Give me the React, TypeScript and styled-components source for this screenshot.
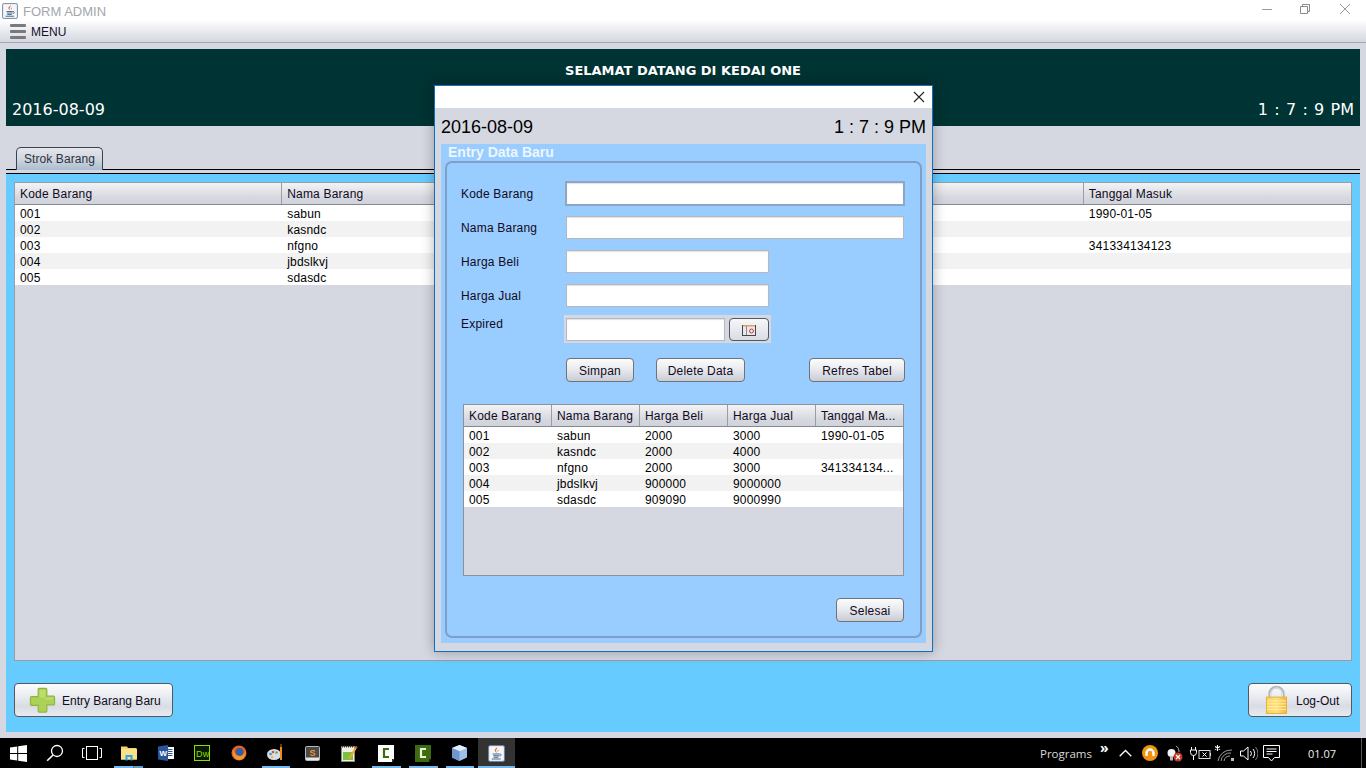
import styled, { createGlobalStyle } from 'styled-components';

const GlobalStyle = createGlobalStyle`
  html, body {
    margin: 0;
    padding: 0;
    width: 1366px;
    height: 768px;
    overflow: hidden;
    background: #d5d8e1;
  }
  * {
    box-sizing: border-box;
  }
`;

const stock = [
  ['001', 'sabun', '2000', '3000', '1990-01-05'],
  ['002', 'kasndc', '2000', '4000', ''],
  ['003', 'nfgno', '2000', '3000', '341334134123'],
  ['004', 'jbdslkvj', '900000', '9000000', ''],
  ['005', 'sdasdc', '909090', '9000990', ''],
];

const JavaIcon = ({ size = 16 }: { size?: number }) => (
  <svg width={size} height={size} viewBox="0 0 18 18">
    <rect x="0.5" y="0.5" width="17" height="17" rx="2" fill="#dfe9f5" stroke="#6d8197" />
    <rect x="2" y="2" width="14" height="14" fill="#f3f6fb" />
    <path d="M9.5 2.5c1.2 1.6-1.8 2.6-.8 4.4.3.6.7 1 .9 1.4-1.8-1-3-2.2-2.2-3.6.5-.9 2-1.2 2.1-2.2z" fill="#e2711d" />
    <path d="M11.2 5c.3 1-1 1.5-.6 2.6-.8-.8-.9-1.8.6-2.6z" fill="#e2711d" />
    <path d="M5 9.6h7.2M5.5 11.3h6.4M6 13h5M4 14.9h9.5" stroke="#49698a" strokeWidth="1.1" fill="none" />
    <path d="M12.2 9.6c2.2-.4 2.4 1.9 0 2.2" stroke="#49698a" fill="none" />
  </svg>
);

const PlusIcon = () => (
  <svg width="27" height="27" viewBox="0 0 28 28">
    <path
      d="M10.5 1.5h7a1 1 0 0 1 1 1v7h7a1 1 0 0 1 1 1v7a1 1 0 0 1-1 1h-7v6.500a1 1 0 0 1-1 1h-7a1 1 0 0 1-1-1V19h-7a1 1 0 0 1-1-1v-7a1 1 0 0 1 1-1h7V2.500a1 1 0 0 1 1-1z"
      fill="#abd155"
      stroke="#8fb540"
      strokeWidth="1.2"
    />
    <path d="M11 3h6v8h8v2h-8v-2h-6z" fill="#c4e27a" opacity="0.7" />
  </svg>
);

const LockIcon = () => (
  <svg width="23" height="30" viewBox="0 0 24 31">
    <defs>
      <linearGradient id="lockBody" x1="0" y1="0" x2="1" y2="0">
        <stop offset="0" stopColor="#fbd25c" />
        <stop offset="0.5" stopColor="#ffe07a" />
        <stop offset="1" stopColor="#f3b93a" />
      </linearGradient>
    </defs>
    <path d="M5 13V9a7 7 0 0 1 14 0v4" fill="none" stroke="#b4b6ba" strokeWidth="3" />
    <path d="M5.800 13V9a6.200 6.200 0 0 1 12.400 0v4" fill="none" stroke="#e6e7ea" strokeWidth="1" />
    <rect x="1.500" y="12.500" width="21" height="17" fill="url(#lockBody)" stroke="#e9ae35" />
    <path d="M2 16.500h20M2 19.500h20M2 22.500h20M2 25.500h20" stroke="#fff0b0" strokeWidth="1" />
  </svg>
);

const CalendarIcon = () => (
  <svg width="14" height="12" viewBox="0 0 14 12">
    <rect x="0.5" y="1.500" width="13" height="10" fill="#e8e8ee" stroke="#44464c" />
    <rect x="1" y="1" width="12" height="1.500" fill="#e0a060" />
    <path d="M4.500 2v9" stroke="#8a8c94" />
    <circle cx="9.500" cy="7" r="2" fill="none" stroke="#d8382e" />
  </svg>
);

const WindowsLogo = () => (
  <svg width="17" height="17" viewBox="0 0 17 17">
    <path d="M0 2.600 7.200 1.500v6.500H0zM8.200 1.300 17 0v8H8.200zM0 9h7.200v6.500L0 14.400zM8.200 9H17v8l-8.800-1.300z" fill="#fff" />
  </svg>
);

const SearchGlyph = () => (
  <svg width="18" height="18" viewBox="0 0 18 18">
    <circle cx="11" cy="7" r="5.500" fill="none" stroke="#fff" strokeWidth="1.300" />
    <path d="M7 11 1.200 16.800" stroke="#fff" strokeWidth="1.600" />
  </svg>
);

const TaskViewGlyph = () => (
  <svg width="20" height="14" viewBox="0 0 20 14">
    <rect x="4.500" y="0.500" width="11" height="13" fill="none" stroke="#fff" />
    <path d="M2.500 2.500H.5v9h2M17.500 2.500h2v9h-2" fill="none" stroke="#fff" />
  </svg>
);

const FolderGlyph = () => (
  <svg width="16" height="16" viewBox="0 0 16 16">
    <path d="M0 1.500h6l1 1.500h8.500v11.500H0z" fill="#f4d36b" />
    <rect x="0" y="4" width="16" height="10.500" fill="#fbe08a" />
    <path d="M4.500 15.500V10h7v5.500H9.500V12h-3v3.500z" fill="#2ea7e6" />
  </svg>
);

const WordGlyph = () => (
  <svg width="16" height="16" viewBox="0 0 16 16">
    <rect x="6" y="2" width="10" height="12" fill="#fff" />
    <path d="M10 4.500h4.500M10 6.500h4.500M10 8.500h4.500M10 10.500h4.500" stroke="#2a5699" />
    <path d="M0 1.500 10 0v16L0 14.500z" fill="#2a5699" />
    <text x="1.500" y="11" fontSize="8" fontWeight="700" fill="#fff" fontFamily="Liberation Sans, sans-serif">W</text>
  </svg>
);

const DwGlyph = () => (
  <svg width="16" height="16" viewBox="0 0 16 16">
    <rect x="0.500" y="0.500" width="15" height="15" fill="#0a1a00" stroke="#8fdc00" />
    <text x="2" y="11.500" fontSize="9" fill="#8fdc00" fontFamily="Liberation Sans, sans-serif">Dw</text>
  </svg>
);

const FirefoxGlyph = () => (
  <svg width="16" height="16" viewBox="0 0 16 16">
    <circle cx="8" cy="8" r="7.500" fill="#e8651f" />
    <circle cx="8.500" cy="7" r="4" fill="#2e5fa8" />
    <path d="M2 4c1 4 3 7 7 7 2 0 4-1.500 5.500-5 .5 4-2 9-6.500 9C4 15 .5 9 2 4z" fill="#f39a26" />
  </svg>
);

const PaletteGlyph = () => (
  <svg width="18" height="18" viewBox="0 0 18 18">
    <ellipse cx="7" cy="10.500" rx="7" ry="5.500" fill="#d5dde8" />
    <circle cx="3.500" cy="10" r="1.300" fill="#3f8fd8" />
    <circle cx="6" cy="8" r="1.300" fill="#e24b3b" />
    <circle cx="9.500" cy="8.500" r="1.300" fill="#5cb848" />
    <circle cx="5" cy="13" r="1.300" fill="#f0c030" />
    <path d="M14 1v15" stroke="#ef8a1d" strokeWidth="2" />
    <path d="M13 0h2v3h-2z" fill="#5a3a20" />
  </svg>
);

const SublimeGlyph = () => (
  <svg width="15" height="15" viewBox="0 0 15 15">
    <rect x="0.500" y="0.500" width="14" height="14" rx="1" fill="#4a4a4a" stroke="#b8b8b8" />
    <rect x="1" y="11.500" width="13" height="2.500" fill="#e6e6e6" />
    <text x="4.500" y="9.500" fontSize="9" fontWeight="700" fill="#f0952c" fontFamily="Liberation Sans, sans-serif">S</text>
  </svg>
);

const NotepadGlyph = () => (
  <svg width="17" height="17" viewBox="0 0 17 17">
    <rect x="0.500" y="1.500" width="13" height="15" fill="#f0f0e6" stroke="#8a8a80" />
    <path d="M1 1.500h12" stroke="#333" strokeWidth="2" strokeDasharray="1 1" />
    <rect x="2" y="7" width="10" height="8" fill="#7cc043" />
    <path d="M8 12 15 1l1.500 1L9.500 13.500 7.500 14z" fill="#f0a828" />
    <path d="M15 1l1.500 1-.8 1.200-1.500-1z" fill="#d8342c" />
  </svg>
);

const CamtasiaGlyph = ({ $green }: { $green?: boolean }) => (
  <svg width="16" height="17" viewBox="0 0 16 17">
    <path d="M0 0h16v14l-2 3H0z" fill={$green ? '#3e6b10' : '#fff'} />
    <path d="M16 14l-2 3v-3z" fill="#222" />
    <path d="M11 4H6v8h5" fill="none" stroke={$green ? '#e6f2d2' : '#3e6b10'} strokeWidth="2.200" />
  </svg>
);

const CubeGlyph = () => (
  <svg width="15" height="16" viewBox="0 0 15 16">
    <path d="M7.500 0 15 3v9.500L7.500 16 0 12.500V3z" fill="#9cc0e8" />
    <path d="M0 3l7.500 3.200L15 3 7.500 0z" fill="#e2eefb" />
    <path d="M7.500 6.200V16L0 12.500V3z" fill="#6f97cf" />
  </svg>
);

const RingGlyph = () => (
  <svg width="16" height="16" viewBox="0 0 16 16">
    <circle cx="8" cy="8" r="8" fill="#f0940f" />
    <path d="M4.500 11V8a3.500 3.500 0 0 1 7 0v3" fill="none" stroke="#fff" strokeWidth="2.400" />
  </svg>
);

const BulbGlyph = () => (
  <svg width="16" height="17" viewBox="0 0 16 17">
    <circle cx="4.500" cy="8" r="4" fill="#f2f2f2" />
    <rect x="3" y="11.500" width="3" height="4" fill="#b8b8b8" />
    <path d="M9 1c2 1 3 3 3 6" fill="none" stroke="#aaa" />
    <circle cx="11" cy="12" r="4.500" fill="#c0392b" />
    <path d="M9 10l4 4M13 10l-4 4" stroke="#fff" strokeWidth="1.200" />
  </svg>
);

const BatteryGlyph = () => (
  <svg width="22" height="15" viewBox="0 0 22 15">
    <path d="M1.500 1v3M5.500 1v3M0.500 4h6v2.500a3 3 0 0 1-6 0zM3.500 9.500V14" fill="none" stroke="#fff" />
    <rect x="9" y="4.500" width="11" height="8" fill="none" stroke="#ddd" />
    <path d="M20.500 7v3" stroke="#ddd" />
    <path d="M12.500 6.500l4 4M16.500 6.500l-4 4" stroke="#fff" />
  </svg>
);

const WifiGlyph = () => (
  <svg width="22" height="18" viewBox="0 0 22 18">
    <path d="M3.500 1v6M1 2.500l5 3M6 2.500l-5 3" stroke="#fff" strokeWidth="1.100" />
    <path d="M4 17a13 13 0 0 1 14-11M7 17a9 9 0 0 1 10-8M10 17a5.500 5.500 0 0 1 6-5" fill="none" stroke="#9a9a9a" />
    <rect x="17" y="14" width="3" height="3" fill="#bdbdbd" />
  </svg>
);

const VolumeGlyph = () => (
  <svg width="18" height="15" viewBox="0 0 18 15">
    <path d="M.5 5h3L8 1v13l-4.500-4h-3z" fill="none" stroke="#fff" />
    <path d="M10.500 5a4 4 0 0 1 0 5M13 3a7 7 0 0 1 0 9" fill="none" stroke="#fff" />
    <path d="M15.500 1a10 10 0 0 1 0 13" fill="none" stroke="#777" />
  </svg>
);

const NoticeGlyph = () => (
  <svg width="17" height="17" viewBox="0 0 17 17">
    <path d="M.5 .5h16v12h-5l-3 3.500-3-3.500h-5z" fill="none" stroke="#fff" />
    <path d="M3.500 4h10M3.500 6.500h10M3.500 9h6" stroke="#fff" />
  </svg>
);

const ChevronGlyph = () => (
  <svg width="13" height="8" viewBox="0 0 13 8">
    <path d="M.7 7.300 6.500 1.500l5.800 5.800" fill="none" stroke="#fff" strokeWidth="1.300" />
  </svg>
);

const taskbarApps = [
  { key: 'search', icon: <SearchGlyph /> },
  { key: 'tasks', icon: <TaskViewGlyph /> },
  { key: 'folder', icon: <FolderGlyph />, running: true, stacked: true },
  { key: 'word', icon: <WordGlyph /> },
  { key: 'dw', icon: <DwGlyph /> },
  { key: 'firefox', icon: <FirefoxGlyph /> },
  { key: 'palette', icon: <PaletteGlyph />, running: true },
  { key: 'sublime', icon: <SublimeGlyph /> },
  { key: 'notepad', icon: <NotepadGlyph /> },
  { key: 'camtasia', icon: <CamtasiaGlyph />, running: true },
  { key: 'camtasia2', icon: <CamtasiaGlyph $green />, running: true },
  { key: 'cube', icon: <CubeGlyph />, running: true },
];

const App = () => {
  return (
    <Page>
      <GlobalStyle />
      <TitleBar>
        <JavaIcon />
        <TitleText>FORM ADMIN</TitleText>
        <WindowButtons>
          <svg width="88" height="12" viewBox="0 0 88 12">
            <path d="M0 6.500h10" stroke="#9a9a9a" />
            <path d="M38.500 3.500h7v7h-7zM40.500 3.500v-2h7v7h-2" fill="none" stroke="#8a8a8a" />
            <path d="M78 1l10 10M88 1 78 11" stroke="#9a9a9a" />
          </svg>
        </WindowButtons>
      </TitleBar>

      <MenuBar>
        <MenuIcon>
          <span />
          <span />
          <span />
        </MenuIcon>
        MENU
      </MenuBar>

      <Content>
        <Banner>
          <BannerTitle>SELAMAT DATANG DI KEDAI ONE</BannerTitle>
          <BannerRow>
            <span>2016-08-09</span>
            <BannerTime>1 : 7 : 9 PM</BannerTime>
          </BannerRow>
        </Banner>

        <TabStrip>
          <Tab>Strok Barang</Tab>
        </TabStrip>

        <StockPanel>
          <TablePane>
            <HeaderRow>
              <HeaderCell>Kode Barang</HeaderCell>
              <HeaderCell>Nama Barang</HeaderCell>
              <HeaderCell>Harga Beli</HeaderCell>
              <HeaderCell>Harga Jual</HeaderCell>
              <HeaderCell>Tanggal Masuk</HeaderCell>
            </HeaderRow>
            {stock.map((row) => (
              <BodyRow key={row[0]}>
                {row.map((value, i) => (
                  <BodyCell key={i}>{value}</BodyCell>
                ))}
              </BodyRow>
            ))}
          </TablePane>
          <ActionRow>
            <BigButton $width={159} $pad={14} $gap={6}>
              <PlusIcon />
              <BigLabel>Entry Barang Baru</BigLabel>
            </BigButton>
            <BigButton $width={104} $pad={16} $gap={8}>
              <LockIcon />
              <BigLabel>Log-Out</BigLabel>
            </BigButton>
          </ActionRow>
        </StockPanel>
      </Content>

      <Taskbar>
        <AppSlot>
          <WindowsLogo />
        </AppSlot>
        {taskbarApps.map((app) => (
          <AppSlot key={app.key} $running={app.running} $stacked={app.stacked}>
            {app.icon}
          </AppSlot>
        ))}
        <AppSlot $running $active>
          <JavaIcon size={17} />
        </AppSlot>
        <Tray>
          <ProgramsLabel>Programs</ProgramsLabel>
          <MoreMark>»</MoreMark>
          <TrayIcon $width={26}>
            <ChevronGlyph />
          </TrayIcon>
          <TrayIcon $width={24}>
            <RingGlyph />
          </TrayIcon>
          <TrayIcon $width={26}>
            <BulbGlyph />
          </TrayIcon>
          <TrayIcon $width={25}>
            <BatteryGlyph />
          </TrayIcon>
          <TrayIcon $width={24}>
            <WifiGlyph />
          </TrayIcon>
          <TrayIcon $width={23}>
            <VolumeGlyph />
          </TrayIcon>
          <TrayIcon $width={23}>
            <NoticeGlyph />
          </TrayIcon>
          <Clock>01.07</Clock>
          <ShowDesktop />
        </Tray>
      </Taskbar>

      <Dialog>
        <DialogTitleBar>
          <svg width="12" height="12" viewBox="0 0 12 12">
            <path d="M1 1l10 10M11 1 1 11" stroke="#222" strokeWidth="1.100" />
          </svg>
        </DialogTitleBar>
        <DialogClock>
          <span>2016-08-09</span>
          <span>1 : 7 : 9 PM</span>
        </DialogClock>
        <EntryPanel>
          <EntryTitle>Entry Data Baru</EntryTitle>
          <EntryFrame>
            <FormGrid>
              <FieldLabel>Kode Barang</FieldLabel>
              <TextField $focused />
              <FieldLabel>Nama Barang</FieldLabel>
              <TextField />
              <FieldLabel>Harga Beli</FieldLabel>
              <TextField $short />
              <FieldLabel>Harga Jual</FieldLabel>
              <TextField $short />
              <ExpiredLabel>Expired</ExpiredLabel>
              <DatePicker>
                <DateInput />
                <DateButton>
                  <CalendarIcon />
                </DateButton>
              </DatePicker>
            </FormGrid>

            <ButtonRow>
              <SmallButton $width={68}>Simpan</SmallButton>
              <SmallButton $width={89}>Delete Data</SmallButton>
              <SmallButton $width={96} $pushRight>
                Refres Tabel
              </SmallButton>
            </ButtonRow>

            <MiniPane>
              <MiniHeaderRow>
                <HeaderCell>Kode Barang</HeaderCell>
                <HeaderCell>Nama Barang</HeaderCell>
                <HeaderCell>Harga Beli</HeaderCell>
                <HeaderCell>Harga Jual</HeaderCell>
                <HeaderCell>Tanggal Ma...</HeaderCell>
              </MiniHeaderRow>
              {stock.map((row) => (
                <MiniBodyRow key={row[0]}>
                  {row.map((value, i) => (
                    <BodyCell key={i}>{value.length > 10 ? '341334134...' : value}</BodyCell>
                  ))}
                </MiniBodyRow>
              ))}
            </MiniPane>

            <FinishRow>
              <SmallButton $width={68}>Selesai</SmallButton>
            </FinishRow>
          </EntryFrame>
        </EntryPanel>
      </Dialog>
    </Page>
  );
};

export default App;

const Page = styled.div`
  position: relative;
  width: 1366px;
  height: 768px;
  display: flex;
  flex-direction: column;
  background-color: #d5d8e1;
  font-family: 'Liberation Sans', Arial, sans-serif;
  font-size: 12px;
  letter-spacing: 0.2px;
  color: #110a22;
  overflow: hidden;
`;

const TitleBar = styled.div`
  height: 21px;
  padding: 1px 0 0 2px;
  display: flex;
  align-items: center;
  gap: 5px;
  background-color: #fff;
`;

const TitleText = styled.span`
  font-size: 13px;
  letter-spacing: 0;
  color: #a4a6ad;
`;

const WindowButtons = styled.div`
  margin-left: auto;
  margin-right: 16px;
  margin-top: -5px;
  display: flex;
`;

const MenuBar = styled.div`
  height: 22px;
  padding-left: 10px;
  display: flex;
  align-items: center;
  gap: 5px;
  font-size: 12px;
  letter-spacing: 0;
  color: #15102a;
  background: linear-gradient(#fdfdfe, #f0f1f4 30%, #d5d8e1);
  border-bottom: 1px solid #a3a6b0;
`;

const MenuIcon = styled.div`
  width: 16px;
  display: flex;
  flex-direction: column;
  gap: 3px;

  span {
    height: 3px;
    border-radius: 1px;
    background-color: #77797d;
  }
`;

const Content = styled.div`
  flex: 1;
  padding: 6px 6px 6px;
  display: flex;
  flex-direction: column;
`;

const Banner = styled.div`
  height: 77px;
  padding: 14px 6px 6px;
  display: flex;
  flex-direction: column;
  justify-content: space-between;
  background-color: #003333;
  color: #fff;
  letter-spacing: 0;
`;

const BannerTitle = styled.div`
  text-align: center;
  font-family: 'DejaVu Sans', Tahoma, sans-serif;
  font-size: 13px;
  font-weight: 700;
  line-height: 16px;
`;

const BannerRow = styled.div`
  display: flex;
  justify-content: space-between;
  font-family: 'DejaVu Sans', Tahoma, sans-serif;
  font-size: 16px;
  line-height: 21px;
`;

const BannerTime = styled.span`
  word-spacing: 1.2px;
`;

const TabStrip = styled.div`
  margin-top: 21px;
  height: 23px;
  padding-left: 10px;
  border-bottom: 1px solid #000;
  display: flex;
`;

const Tab = styled.div`
  width: 87px;
  height: 23px;
  display: flex;
  align-items: center;
  justify-content: center;
  border: 1px solid #3c4250;
  border-bottom: none;
  border-radius: 5px 5px 0 0;
  background: linear-gradient(#e4e7ec, #d0d6df 50%, #a9bdd0);
  font-size: 12px;
  letter-spacing: 0.1px;
  color: #2c3340;
`;

const StockPanel = styled.div`
  margin-top: 3px;
  flex: 1;
  padding: 8px 8px 15px;
  display: flex;
  flex-direction: column;
  gap: 22px;
  border-top: 1px solid #000;
  background-color: #66ccff;
`;

const TablePane = styled.div`
  flex: 1;
  border: 1px solid #9a9da6;
  background-color: #d5d8e1;
`;

const HeaderRow = styled.div`
  height: 22px;
  display: grid;
  grid-template-columns: repeat(5, 1fr);
  background: linear-gradient(#f2f3f5, #d6d8df 70%, #d0d3db);
  border-bottom: 1px solid #85888f;
`;

const HeaderCell = styled.div`
  padding: 1px 0 0 5px;
  line-height: 20px;
  white-space: nowrap;
  overflow: hidden;
  border-right: 1px solid #9a9da6;

  &:last-child {
    border-right: none;
  }
`;

const BodyRow = styled.div`
  height: 16px;
  display: grid;
  grid-template-columns: repeat(5, 1fr);
  background-color: #fff;

  &:nth-child(odd) {
    background-color: #f2f2f2;
  }
`;

const BodyCell = styled.div`
  padding-left: 5px;
  line-height: 18px;
  color: #000;
  white-space: nowrap;
  overflow: hidden;
`;

const ActionRow = styled.div`
  display: flex;
  justify-content: space-between;
`;

const BigButton = styled.button<{ $width: number; $pad: number; $gap: number }>`
  width: ${(p) => p.$width}px;
  height: 34px;
  padding: 0 0 0 ${(p) => p.$pad}px;
  display: flex;
  align-items: center;
  gap: ${(p) => p.$gap}px;
  border: 1px solid #55585f;
  border-radius: 4px;
  background: linear-gradient(#fbfcfd, #eef0f4 30%, #d9dce4 70%, #e9ebf0);
  font-family: inherit;
  font-size: 12px;
  letter-spacing: 0;
  color: #110a22;
  overflow: visible;
`;

const BigLabel = styled.span`
  margin-top: 2px;
`;

const Taskbar = styled.div`
  height: 30px;
  display: flex;
  background-color: #000;
`;

const AppSlot = styled.div<{ $running?: boolean; $active?: boolean; $stacked?: boolean }>`
  position: relative;
  width: 36.8px;
  height: 30px;
  display: flex;
  align-items: center;
  justify-content: center;
  background-color: ${(p) => (p.$active ? '#333' : 'transparent')};

  &::after {
    content: '';
    display: ${(p) => (p.$running ? 'block' : 'none')};
    position: absolute;
    bottom: 0;
    left: ${(p) => (p.$active ? '0' : '4px')};
    right: ${(p) => (p.$active ? '0' : '4px')};
    height: 2px;
    background: ${(p) =>
      p.$stacked ? 'linear-gradient(90deg, #76b9ed 66%, #3f6f96 66%, #5f9bc8 70%)' : '#76b9ed'};
  }
`;

const Tray = styled.div`
  margin-left: auto;
  display: flex;
  align-items: center;
  color: #e6e6e6;
  letter-spacing: 0;
`;

const ProgramsLabel = styled.span`
  font-family: 'Open Sans', sans-serif;
  font-size: 11.5px;
  color: #d8d8d8;
`;

const MoreMark = styled.span`
  width: 20px;
  margin-top: -12px;
  padding-left: 8px;
  font-family: 'Open Sans', sans-serif;
  font-size: 14px;
  font-weight: 700;
  color: #fff;
`;

const TrayIcon = styled.div<{ $width: number }>`
  width: ${(p) => p.$width}px;
  display: flex;
  justify-content: center;
`;

const Clock = styled.span`
  width: 78px;
  text-align: center;
  font-family: 'Open Sans', sans-serif;
  font-size: 11px;
  color: #eee;
`;

const ShowDesktop = styled.div`
  width: 5px;
  height: 30px;
  border-left: 1px solid #555;
`;

const Dialog = styled.div`
  position: absolute;
  left: 434px;
  top: 85px;
  width: 499px;
  height: 567px;
  display: flex;
  flex-direction: column;
  border: 1px solid #0f6fc0;
  background-color: #d5d8e1;
  box-shadow: 0 0 12px rgba(0, 0, 0, 0.3);
`;

const DialogTitleBar = styled.div`
  height: 22px;
  padding-right: 7px;
  display: flex;
  align-items: center;
  justify-content: flex-end;
  background-color: #fff;
`;

const DialogClock = styled.div`
  height: 36px;
  padding: 2px 6px 0;
  display: flex;
  align-items: center;
  justify-content: space-between;
  font-size: 18px;
  letter-spacing: 0;
  color: #000;
`;

const EntryPanel = styled.div`
  margin: 0 6px;
  height: 499px;
  padding: 0 4px 5px;
  display: flex;
  flex-direction: column;
  background-color: #99ccff;
`;

const EntryTitle = styled.div`
  height: 17px;
  padding-left: 3px;
  font-size: 14px;
  font-weight: 700;
  line-height: 17px;
  letter-spacing: 0;
  color: #eef6ff;
`;

const EntryFrame = styled.div`
  flex: 1;
  padding: 18px 17px 14px 14px;
  display: flex;
  flex-direction: column;
  border: 2px solid #7f9fc8;
  border-radius: 7px;
`;

const FormGrid = styled.div`
  display: grid;
  grid-template-columns: 105px 1fr;
  grid-auto-rows: 24px;
  row-gap: 10px;
  align-items: center;
`;

const FieldLabel = styled.label`
  align-self: start;
  line-height: 26px;
  color: #110a22;
`;

const ExpiredLabel = styled(FieldLabel)`
  line-height: 14px;
`;

const TextField = styled.input<{ $focused?: boolean; $short?: boolean }>`
  width: ${(p) => (p.$short ? '203px' : p.$focused ? '340px' : '338px')};
  height: ${(p) => (p.$focused ? '25px' : '23px')};
  border: ${(p) => (p.$focused ? '2px solid #8da6c6' : '1px solid #b5b8c0')};
  margin: ${(p) => (p.$focused ? '1px 0 0 -1px' : '0')};
  background-color: #fff;
  box-shadow: inset 0 1px 1px #e2e2e2;
  outline: none;
`;

const DatePicker = styled.div`
  align-self: start;
  width: 207px;
  height: 28px;
  margin: -2px 0 0 -2px;
  padding: 3px 2px;
  display: flex;
  justify-content: space-between;
  background-color: #d5d8e1;
`;

const DateInput = styled.input`
  width: 159px;
  height: 23px;
  border: 1px solid #b5b8c0;
  background-color: #fff;
  box-shadow: inset 0 1px 1px #e2e2e2;
  outline: none;
`;

const DateButton = styled.button`
  width: 40px;
  height: 23px;
  padding: 0;
  display: flex;
  align-items: center;
  justify-content: center;
  border: 1px solid #55585f;
  border-radius: 4px;
  background: linear-gradient(#f6f7f9, #d9dce4);
`;

const ButtonRow = styled.div`
  margin-top: 17px;
  padding-left: 105px;
  display: flex;
  gap: 22px;
`;

const SmallButton = styled.button<{ $width: number; $pushRight?: boolean }>`
  width: ${(p) => p.$width}px;
  height: 24px;
  margin-left: ${(p) => (p.$pushRight ? 'auto' : '0')};
  margin-right: ${(p) => (p.$pushRight ? '-2px' : '0')};
  padding: 1px 0 0;
  border: 1px solid #6f7278;
  border-radius: 4px;
  background: linear-gradient(#fafbfc, #ebedf1 40%, #c9ccd5);
  font-family: inherit;
  font-size: 12px;
  letter-spacing: 0.2px;
  color: #110a22;
`;

const MiniPane = styled.div`
  margin: 22px -1px 0 2px;
  height: 172px;
  border: 1px solid #8e9198;
  background-color: #d5d8e1;
`;

const MiniHeaderRow = styled(HeaderRow)`
  grid-template-columns: repeat(5, 88px);
`;

const MiniBodyRow = styled(BodyRow)`
  grid-template-columns: repeat(5, 88px);
`;

const FinishRow = styled.div`
  margin: auto -1px 0 0;
  display: flex;
  justify-content: flex-end;
`;
